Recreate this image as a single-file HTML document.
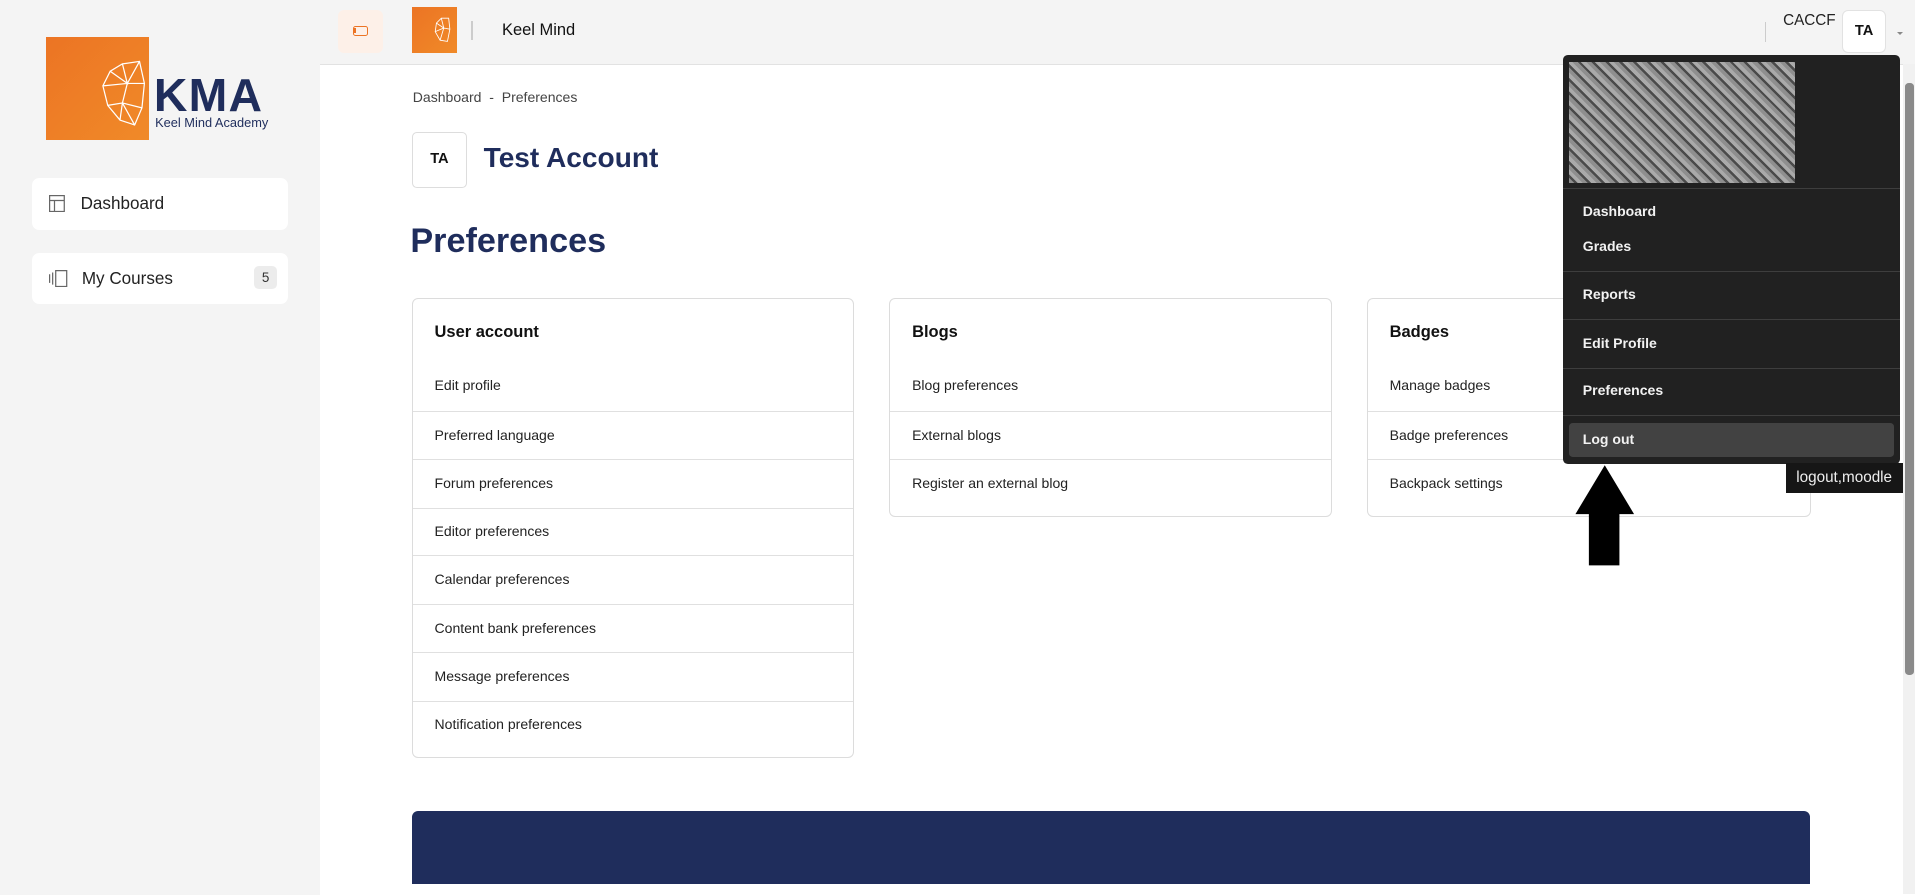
<!DOCTYPE html>
<html><head><meta charset="utf-8"><style>
html,body{margin:0;padding:0;}
body{width:1568px;height:721px;overflow:hidden;zoom:1.22130;background:#f4f4f4;font-family:"Liberation Sans",sans-serif;position:relative;}
.a{position:absolute;}
.main{left:262px;top:52px;width:1306px;height:680px;background:#fff;border-top:1px solid #e2e2e2;}
.nav{background:#fff;border-radius:6px;left:26px;width:210px;height:42px;}
.nav span{position:absolute;left:40px;top:13px;font-size:14px;color:#222;}
.card{background:#fff;border:1px solid #dcdcdc;border-radius:5px;}
.card h4{margin:0;position:absolute;left:18px;top:20px;font-size:13.5px;color:#111;}
.item{position:absolute;left:0;right:0;height:39.5px;font-size:11.5px;color:#222;}
.item span{position:absolute;left:18px;top:12px;}
.item.b{border-top:1px solid #e0e0e0;}
.dd{left:1280px;top:45px;width:276px;height:335px;background:#212121;border-radius:4px;}
.dd .t{position:absolute;left:16px;font-size:11.5px;font-weight:bold;color:#f2f2f2;}
.dd .hr{position:absolute;left:0;right:0;height:1px;background:#3e3e3e;}
</style></head><body>
<div class="a main"></div>
<!-- logo -->
<div class="a" style="left:38px;top:30px;width:84px;height:85px;background:linear-gradient(135deg,#ec7424,#f08a28);"></div>
<svg class="a" style="left:80px;top:48px" width="42" height="56" viewBox="0 0 42 56"><g fill="none" stroke="#fff" stroke-width="1"><path d="M20 4 L34 2 L38 20 L36 40 L30 54 L18 50 L8 38 L4 22 L10 10 Z M20 4 L24 20 L10 10 M24 20 L38 20 M24 20 L4 22 M24 20 L20 36 L8 38 M20 36 L36 40 M20 36 L30 54 M20 36 L18 50 M34 2 L24 20"/></g></svg>
<div class="a" style="left:126px;top:56px;font-size:38px;font-weight:bold;color:#1f2d5c;letter-spacing:1px;">KMA</div>
<div class="a" style="left:127px;top:94px;font-size:10.5px;color:#1f2d5c;">Keel Mind Academy</div>
<!-- nav -->
<div class="a nav" style="top:146px"><svg class="a" style="left:14px;top:14px" width="13" height="14"><rect x=".5" y=".5" width="12" height="13" fill="none" stroke="#666"/><path d="M.5 4.5H12.5M4.5 4.5V13.5" stroke="#666" fill="none"/></svg><span>Dashboard</span></div>
<div class="a nav" style="top:207px"><svg class="a" style="left:14px;top:14px" width="16" height="14"><path d="M5.5 .5h9v13h-9zM3 2v10M.5 3.5v7" stroke="#666" fill="none"/></svg><span style="left:41px">My Courses</span><div class="a" style="left:182px;top:11px;width:19px;height:19px;background:#ececec;border-radius:4px;font-size:11px;text-align:center;line-height:19px;color:#333;">5</div></div>
<!-- header -->
<div class="a" style="left:277px;top:8px;width:37px;height:35px;background:#fdf0e8;border-radius:5px;"></div>
<div class="a" style="left:289px;top:21px;width:11px;height:7px;border:1.5px solid #ec7424;border-radius:2px;"></div>
<div class="a" style="left:290px;top:23px;width:1.5px;height:4px;background:#ec7424;"></div>
<div class="a" style="left:337px;top:6px;width:37px;height:37px;background:linear-gradient(135deg,#ec7424,#f08a28);"></div>
<svg class="a" style="left:355px;top:14px" width="14" height="22" viewBox="0 0 14 22"><path d="M6 1L12 1L13 10L11 20L5 19L1 12L2 5Z M6 1L8 9L2 5M8 9L13 10M8 9L5 19M8 9L1 12" fill="none" stroke="#fff" stroke-width=".7"/></svg>
<div class="a" style="left:386px;top:17px;width:1px;height:16px;background:#ccc;"></div>
<div class="a" style="left:411px;top:17px;font-size:13.5px;color:#111;">Keel Mind</div>
<div class="a" style="left:1445px;top:18px;width:1px;height:16px;background:#ccc;"></div>
<div class="a" style="left:1460px;top:10px;font-size:12.5px;color:#222;">CACCF</div>
<div class="a" style="left:1508px;top:8px;width:35px;height:34px;background:#fff;border:1px solid #e2e2e2;border-radius:5px;font-size:12px;font-weight:bold;text-align:center;line-height:34px;color:#111;">TA</div>
<div class="a" style="left:1553px;top:26px;border:3px solid transparent;border-top:3px solid #888;"></div>
<!-- page -->
<div class="a" style="left:338px;top:73px;font-size:11.5px;color:#444;">Dashboard&nbsp;&nbsp;-&nbsp;&nbsp;Preferences</div>
<div class="a" style="left:337px;top:108px;width:44px;height:44px;border:1px solid #ddd;border-radius:4px;font-size:12px;font-weight:bold;text-align:center;line-height:44px;color:#111;">TA</div>
<div class="a" style="left:396px;top:116px;font-size:23px;font-weight:bold;color:#1f2d5c;">Test Account</div>
<div class="a" style="left:336px;top:182px;font-size:28px;font-weight:bold;color:#1f2d5c;">Preferences</div>

<div class="a card" style="left:337px;top:244px;width:361px;height:375px;">
<h4>User account</h4>
<div class="item" style="top:52px"><span>Edit profile</span></div>
<div class="item b" style="top:92px"><span>Preferred language</span></div>
<div class="item b" style="top:131px"><span>Forum preferences</span></div>
<div class="item b" style="top:171px"><span>Editor preferences</span></div>
<div class="item b" style="top:210px"><span>Calendar preferences</span></div>
<div class="item b" style="top:250px"><span>Content bank preferences</span></div>
<div class="item b" style="top:289px"><span>Message preferences</span></div>
<div class="item b" style="top:329px"><span>Notification preferences</span></div>
</div>
<div class="a card" style="left:728px;top:244px;width:361px;height:178px;">
<h4>Blogs</h4>
<div class="item" style="top:52px"><span>Blog preferences</span></div>
<div class="item b" style="top:92px"><span>External blogs</span></div>
<div class="item b" style="top:131px"><span>Register an external blog</span></div>
</div>
<div class="a card" style="left:1119px;top:244px;width:362px;height:178px;">
<h4>Badges</h4>
<div class="item" style="top:52px"><span>Manage badges</span></div>
<div class="item b" style="top:92px"><span>Badge preferences</span></div>
<div class="item b" style="top:131px"><span>Backpack settings</span></div>
</div>
<div class="a" style="left:337px;top:664px;width:1145px;height:60px;background:#1f2d5c;border-radius:5px 5px 0 0;"></div>

<!-- scrollbar -->
<div class="a" style="left:1558px;top:52px;width:10px;height:680px;background:#f1f1f1;"></div>
<div class="a" style="left:1560px;top:68px;width:7px;height:485px;background:#8a8a8a;border-radius:3px;"></div>
<!-- dropdown -->
<div class="a dd">
<div class="a" style="left:5px;top:6px;width:185px;height:99px;background:repeating-linear-gradient(45deg,#aaa 0 3px,#555 3px 5px,#ccc 5px 8px);opacity:.8;"></div>
<div class="hr" style="top:109px"></div>
<div class="t" style="top:121px">Dashboard</div>
<div class="t" style="top:150px">Grades</div>
<div class="hr" style="top:177px"></div>
<div class="t" style="top:189px">Reports</div>
<div class="hr" style="top:216px"></div>
<div class="t" style="top:229px">Edit Profile</div>
<div class="hr" style="top:256px"></div>
<div class="t" style="top:268px">Preferences</div>
<div class="hr" style="top:295px"></div>
<div class="a" style="left:5px;top:301px;width:266px;height:28px;background:#424242;border-radius:3px;"></div>
<div class="t" style="top:308px">Log out</div>
</div>
<div class="a" style="left:1462px;top:379px;width:96px;height:25px;background:#161616;color:#eee;font-size:12.5px;line-height:25px;text-align:center;">logout,moodle</div>
<svg class="a" style="left:1288px;top:380px" width="52" height="85"><path d="M26 1L50 41H38V83H13V41H2Z" fill="#000"/></svg>
</body></html>
